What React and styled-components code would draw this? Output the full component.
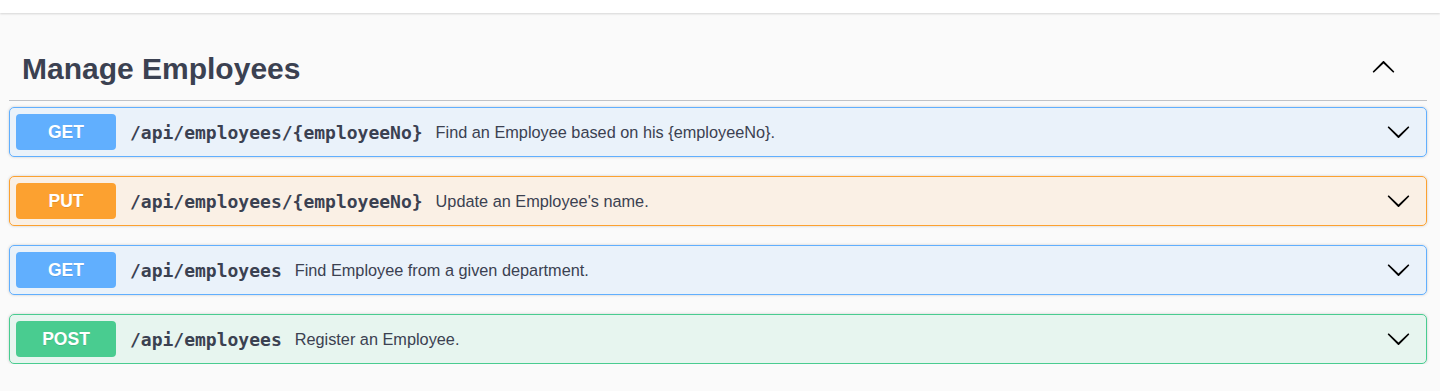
import React from 'react'
import styled, { createGlobalStyle } from 'styled-components'

const GlobalStyle = createGlobalStyle`
    html, body {
        margin: 0;
        padding: 0;
        background: #fafafa;
    }
    body {
        font-family: "Liberation Sans", Arial, sans-serif;
        color: #3b4151;
    }
`;

const methods = {
    get: { color: '#61affe', bg: 'rgba(97, 175, 254, 0.1)' },
    put: { color: '#fca130', bg: 'rgba(252, 161, 48, 0.1)' },
    post: { color: '#49cc90', bg: 'rgba(73, 204, 144, 0.1)' },
}

const operations = [
    { id: 1, method: 'get', path: '/api/employees/{employeeNo}', text: 'Find an Employee based on his {employeeNo}.' },
    { id: 2, method: 'put', path: '/api/employees/{employeeNo}', text: "Update an Employee's name." },
    { id: 3, method: 'get', path: '/api/employees', text: 'Find Employee from a given department.' },
    { id: 4, method: 'post', path: '/api/employees', text: 'Register an Employee.' },
]

function Arrow({ up }) {
    return (
        <svg width="25" height="25" viewBox="0 0 20 20" style={up ? { transform: 'rotate(180deg)' } : undefined}>
            <path
                fill="#000"
                d="M17.418 6.109c.272-.268.709-.268.979 0s.271.701 0 .969l-7.908 7.83c-.27.268-.707.268-.979 0l-7.908-7.83c-.27-.268-.27-.701 0-.969.271-.268.709-.268.979 0L10 13.25l7.418-7.141z"
            />
        </svg>
    )
}

export default function App() {
    return (
        <>
            <GlobalStyle />
            <TopBar />
            <Section>
                <TagHead>
                    <h3>Manage Employees</h3>
                    <Toggle><Arrow up /></Toggle>
                </TagHead>
                <List>
                    {operations.map((op) => (
                        <Block key={op.id} $method={op.method}>
                            <Badge $method={op.method}>{op.method.toUpperCase()}</Badge>
                            <Path>{op.path}</Path>
                            <Desc>{op.text}</Desc>
                            <Expand><Arrow /></Expand>
                        </Block>
                    ))}
                </List>
            </Section>
        </>
    )
}

const TopBar = styled.div`
    height: 13px;
    background: #fff;
    box-shadow: 0 1px 2px rgba(0, 0, 0, 0.15);
`;

const Section = styled.div`
    padding: 24px 13px 0 9px;
`;

const TagHead = styled.div`
    display: flex;
    align-items: center;
    justify-content: space-between;
    height: 63px;
    padding: 0 31px 0 13px;
    border-bottom: 1px solid rgba(59, 65, 81, 0.3);
    margin-bottom: 6px;

    h3 {
        margin: 0;
        font-size: 30px;
        font-weight: 700;
        line-height: 1;
        color: #3b4151;
    }
`;

const Toggle = styled.div`
    display: flex;
    align-items: center;
    margin-top: -2px;
`;

const List = styled.div`
    display: flex;
    flex-direction: column;
    gap: 19px;
`;

const Block = styled.div`
    display: flex;
    align-items: center;
    padding: 6px 15px 6px 6px;
    border: 1px solid ${(p) => methods[p.$method].color};
    background: ${(p) => methods[p.$method].bg};
    border-radius: 5px;
    box-shadow: 0 0 3px rgba(0, 0, 0, 0.19);
`;

const Badge = styled.div`
    width: 100px;
    height: 36px;
    display: flex;
    align-items: center;
    justify-content: center;
    background: ${(p) => methods[p.$method].color};
    color: #fff;
    border-radius: 4px;
    font-size: 17.5px;
    font-weight: 700;
    text-shadow: 0 1px 0 rgba(0, 0, 0, 0.1);
`;

const Path = styled.span`
    padding: 0 13px 0 14px;
    font-family: "DejaVu Sans Mono", "Liberation Mono", monospace;
    font-weight: 700;
    font-size: 18px;
    color: #3b4151;
`;

const Desc = styled.span`
    flex: 1;
    font-size: 16.3px;
    color: #3b4151;
`;

const Expand = styled.div`
    display: flex;
    align-items: center;
    margin-top: -2px;
`;
